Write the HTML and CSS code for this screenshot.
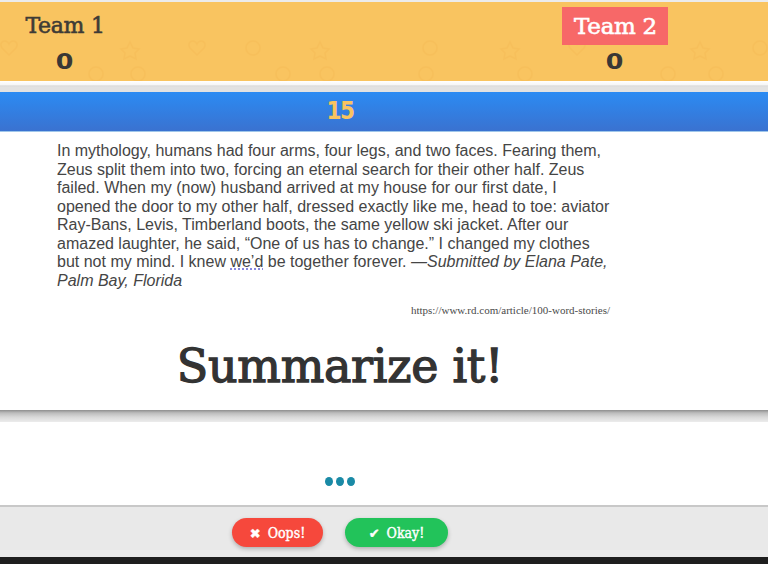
FILE: index.html
```html
<!DOCTYPE html>
<html>
<head>
<meta charset="utf-8">
<link rel="stylesheet" href="styles.css">
</head>
<body>
<div class="topline"></div>
<header class="header">
  <svg class="pattern" width="768" height="79" viewBox="0 0 768 79">
    <g fill="none" stroke="#f0ad45" stroke-width="1.5">
      <path d="M2 46 c-4-6 4-10 7-4 c3-6 11-2 7 4 l-7 7z"/>
      <path d="M190 46 c-4-6 4-10 7-4 c3-6 11-2 7 4 l-7 7z"/>
      <path d="M570 46 c-4-6 4-10 7-4 c3-6 11-2 7 4 l-7 7z"/>
      <path d="M130 40 l3 6 6 1-4 4 1 6-6-3-6 3 1-6-4-4 6-1z"/>
      <path d="M320 40 l3 6 6 1-4 4 1 6-6-3-6 3 1-6-4-4 6-1z"/>
      <path d="M510 40 l3 6 6 1-4 4 1 6-6-3-6 3 1-6-4-4 6-1z"/>
      <path d="M700 40 l3 6 6 1-4 4 1 6-6-3-6 3 1-6-4-4 6-1z"/>
      <circle cx="253" cy="46" r="7"/>
      <circle cx="430" cy="46" r="7"/>
      <circle cx="138" cy="72" r="7"/>
      <circle cx="327" cy="72" r="7"/>
      <circle cx="525" cy="72" r="7"/>
      <circle cx="716" cy="72" r="7"/>
      <circle cx="96" cy="72" r="7"/>
      <circle cx="283" cy="72" r="7"/>
      <circle cx="426" cy="72" r="7"/>
      <circle cx="668" cy="72" r="7"/>
      <circle cx="760" cy="46" r="7"/>
    </g>
  </svg>
  <div class="wrap teams">
    <div class="team">
      <div class="team-name">Team 1</div>
      <div class="score">0</div>
    </div>
    <div class="team">
      <div class="team-name active">Team 2</div>
      <div class="score">0</div>
    </div>
  </div>
</header>
<div class="sep"></div>
<div class="timer"><div class="wrap timer-inner">15</div></div>
<main class="card">
  <div class="wrap">
    <p class="story">In mythology, humans had four arms, four legs, and two faces. Fearing them, Zeus split them into two, forcing an eternal search for their other half. Zeus failed. When my (now) husband arrived at my house for our first date, I opened the door to my other half, dressed exactly like me, head to toe: aviator Ray-Bans, Levis, Timberland boots, the same yellow ski jacket. After our amazed laughter, he said, “One of us has to change.” I changed my clothes but not my mind. I knew <span class="spell">we’d</span> be together forever. <em>—Submitted by Elana Pate, Palm Bay, Florida</em></p>
    <div class="source">https://www.rd.com/article/100-word-stories/</div>
    <h1 class="prompt">Summarize it!</h1>
  </div>
</main>
<div class="card-shadow"></div>
<section class="waiting">
  <div class="wrap dots"><span></span><span></span><span></span></div>
</section>
<footer class="footer">
  <div class="wrap actions">
    <button class="btn oops"><span class="ico">✖</span> Oops!</button>
    <button class="btn okay"><span class="ico">✔</span> Okay!</button>
  </div>
</footer>
<div class="bottombar"></div>
</body>
</html>
```

FILE: styles.css
```css
html, body {
  margin: 0;
  padding: 0;
  background: #ffffff;
  width: 768px;
  height: 564px;
  overflow: hidden;
}

.wrap {
  width: 680px;
}

.topline {
  height: 2px;
  background: #ececec;
}

.header {
  position: relative;
  height: 79px;
  background: #f9c460;
  overflow: hidden;
}

.pattern {
  position: absolute;
  left: 0;
  top: 0;
  opacity: 0.18;
}

.teams {
  position: relative;
  display: flex;
  justify-content: space-between;
}

.team {
  width: 130px;
  display: flex;
  flex-direction: column;
  align-items: center;
}

.team-name {
  font-family: "DejaVu Serif", serif;
  font-size: 22px;
  color: #3e3b36;
  -webkit-text-stroke: 0.6px #3e3b36;
  height: 38px;
  line-height: 38px;
  margin-top: 5px;
  padding: 0 10px;
  letter-spacing: -0.3px;
}

.team-name.active {
  background: #f76868;
  color: #ffffff;
  -webkit-text-stroke: 0.6px #ffffff;
  font-size: 23px;
  padding: 0 11px 0 12px;
  margin-left: 0;
}

.score {
  font-family: "DejaVu Sans", sans-serif;
  font-weight: bold;
  font-size: 22px;
  color: #3a3835;
  line-height: 26px;
  margin-top: 4px;
  transform: scaleX(1.15);
}

.sep {
  height: 7px;
  background: linear-gradient(#ffffff 0, #f7f7f7 50%, #dcdcdc 70%, #e4e4e4 100%);
  border-bottom: 4px solid #e2e2e2;
}

.timer {
  height: 39px;
  background: linear-gradient(#2b8bf3, #3a72d0);
  border-bottom: 1px solid #9fc6ea;
}

.timer-inner {
  text-align: center;
  font-family: "DejaVu Sans Condensed", "DejaVu Sans", sans-serif;
  font-weight: bold;
  font-size: 24px;
  color: #f9c460;
  line-height: 39px;
  letter-spacing: -1.5px;
}

.card {
  height: 278px;
  background: #ffffff;
}

.story {
  margin: 0 0 0 57px;
  padding-top: 10px;
  width: 556px;
  font-family: "Liberation Sans", Arial, sans-serif;
  font-size: 16px;
  line-height: 18.5px;
  color: #454545;
}

.story em {
  font-style: italic;
}

.spell {
  text-decoration: underline dotted #6a6ad8;
  text-underline-offset: 2px;
}

.source {
  margin: 14px 0 0 0;
  width: 610px;
  text-align: right;
  font-family: "Liberation Serif", serif;
  font-size: 11px;
  color: #4a4a4a;
}

.prompt {
  margin: 22px 0 0 0;
  text-align: center;
  font-family: "DejaVu Serif", serif;
  font-weight: normal;
  font-size: 46px;
  line-height: 56px;
  color: #333333;
  -webkit-text-stroke: 1.3px #333333;
  letter-spacing: -0.3px;
}

.card-shadow {
  height: 12px;
  background: linear-gradient(#8e8e8e 0, #bdbdbd 25%, #d9d9d9 60%, #ececec 100%);
}

.waiting {
  height: 83px;
  background: #ffffff;
}

.dots {
  display: flex;
  justify-content: center;
  gap: 3px;
  padding-top: 55px;
}

.dots span {
  width: 8px;
  height: 9px;
  border-radius: 50%;
  background: #1a8aa6;
}

.footer {
  height: 50px;
  border-top: 2px solid #c8c8c8;
  background: #e9e9e9;
}

.actions {
  display: flex;
  justify-content: center;
  gap: 22px;
  padding-top: 11px;
}

.btn {
  border: none;
  height: 29px;
  border-radius: 15px;
  color: #ffffff;
  font-family: "DejaVu Serif Condensed", "DejaVu Serif", serif;
  font-size: 14px;
  -webkit-text-stroke: 0.4px #ffffff;
  padding: 0;
  box-shadow: 0 2px 4px rgba(0, 0, 0, 0.25);
}

.btn .ico {
  font-family: "DejaVu Sans", sans-serif;
  font-size: 13px;
  margin-right: 3px;
}

.oops {
  width: 91px;
  background: #f6483c;
}

.okay {
  width: 103px;
  background: #22c35a;
}

.bottombar {
  height: 7px;
  background: #1e1e1e;
}
```
